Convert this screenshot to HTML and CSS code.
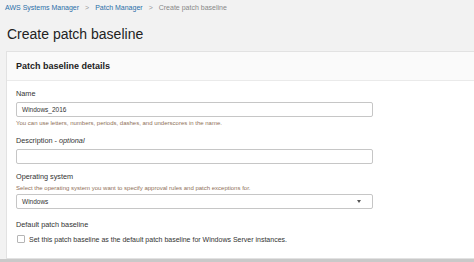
FILE: index.html
```html
<!DOCTYPE html>
<html lang="en">

<head>
    <meta charset="UTF-8">
    <meta name="viewport" content="width=device-width, initial-scale=1.0">
    <title>Create patch baseline</title>
    <link rel="stylesheet" href="styles.css">
</head>

<body>
    <nav class="breadcrumb">
        <a href="#">AWS Systems Manager</a>
        <span class="sep">&gt;</span>
        <a href="#">Patch Manager</a>
        <span class="sep">&gt;</span>
        <span class="current">Create patch baseline</span>
    </nav>

    <h1 class="title">Create patch baseline</h1>

    <div class="panel">
        <div class="panel-header">Patch baseline details</div>
        <div class="panel-body">
            <div class="field">
                <label class="label">Name</label>
                <div class="input">Windows_2016</div>
                <div class="hint">You can use letters, numbers, periods, dashes, and underscores in the name.</div>
            </div>

            <div class="field">
                <label class="label">Description - <i>optional</i></label>
                <div class="input"></div>
            </div>

            <div class="field">
                <label class="label">Operating system</label>
                <div class="hint hint-top">Select the operating system you want to specify approval rules and patch exceptions for.</div>
                <div class="input select">
                    <span>Windows</span>
                    <span class="arrow"></span>
                </div>
            </div>

            <div class="field field-last">
                <label class="label">Default patch baseline</label>
                <div class="check-row">
                    <span class="checkbox"></span>
                    <span>Set this patch baseline as the default patch baseline for Windows Server instances.</span>
                </div>
            </div>
        </div>
    </div>
    <div class="bottom-bar"></div>
</body>

</html>
```

FILE: styles.css
```css
body {
    margin: 0;
    background-color: #f2f2f2;
    font-family: "Liberation Sans", Arial, sans-serif;
    color: #333;
    overflow: hidden;
}

.breadcrumb {
    height: 14px;
    padding-left: 5px;
    display: flex;
    align-items: center;
    gap: 5px;
    font-size: 7px;
}

.breadcrumb a {
    color: #2b6fa8;
    text-decoration: none;
}

.breadcrumb .sep {
    color: #999;
    margin: 0 1px;
}

.breadcrumb .current {
    color: #888;
}

.title {
    margin: 8px 0 5px 7px;
    font-size: 14px;
    line-height: 24px;
    font-weight: normal;
    color: #222;
}

.panel {
    margin-left: 6px;
    width: 480px;
    background-color: #fff;
    border: 1px solid #e2e2e2;
    border-right: none;
}

.panel-header {
    height: 28px;
    display: flex;
    align-items: center;
    padding-left: 9px;
    background-color: #fafafa;
    border-bottom: 1px solid #eaeaea;
    font-size: 9px;
    font-weight: bold;
    color: #222;
}

.panel-body {
    padding: 0 9px 12px;
}

.field {
    margin-top: 7px;
}

.label {
    display: block;
    font-size: 7.3px;
    line-height: 12px;
    color: #333;
}

.input {
    box-sizing: border-box;
    width: 357px;
    height: 15px;
    margin-top: 2px;
    padding: 0 5px;
    border: 1px solid #c6c6c6;
    border-radius: 2px;
    font-size: 6.5px;
    line-height: 13px;
    color: #333;
}

.hint {
    margin-top: 1px;
    font-size: 6px;
    line-height: 10px;
    color: #8f7158;
}

.hint-top {
    margin-top: 0;
}

.select {
    margin-top: 1px;
    display: flex;
    justify-content: space-between;
    align-items: center;
}

.arrow {
    width: 0;
    height: 0;
    margin-right: 6px;
    border-left: 2.5px solid transparent;
    border-right: 2.5px solid transparent;
    border-top: 3px solid #555;
}

.field-last {
    margin-top: 10px;
}

.check-row {
    display: flex;
    align-items: center;
    gap: 4px;
    margin-top: 1px;
    padding-left: 1px;
    height: 14px;
    font-size: 7px;
    color: #333;
}

.checkbox {
    box-sizing: border-box;
    width: 8px;
    height: 8px;
    border: 1px solid #b5b5b5;
    border-radius: 1px;
}

.bottom-bar {
    height: 6px;
    background-color: #c9c9c9;
}
```
